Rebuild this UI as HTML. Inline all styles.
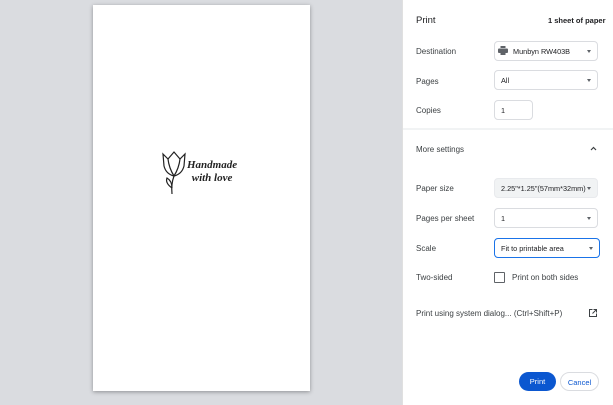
<!DOCTYPE html><html><head><style>
body{margin:0;width:613px;height:405px;overflow:hidden;font-family:"Liberation Sans",sans-serif;position:relative;background:#fff}
.l{position:absolute;left:0;top:0;width:402px;height:405px;background:#dadce0}
.paper{position:absolute;left:93px;top:5px;width:217px;height:386px;background:#fff;box-shadow:0 1px 4px rgba(0,0,0,.35)}
.r{position:absolute;left:402px;top:0;width:211px;height:405px;background:#fff;border-left:1px solid #e0e0e0}
.t{position:absolute;font-size:8px;color:#3c4043;white-space:nowrap}
.sel{position:absolute;left:494px;width:104px;height:20px;border:1px solid #dadce0;border-radius:4px;box-sizing:border-box;font-size:7.3px;color:#202124;padding-left:6px;display:flex;align-items:center}
.sel:after{content:"";position:absolute;right:6px;top:8px;border:2px solid transparent;border-top:3px solid #5f6368}
.btn{position:absolute;top:372px;height:19px;border-radius:10px;font-size:7.5px;text-align:center;line-height:19px;box-sizing:border-box}
</style></head><body>
<div class="l"></div>
<div class="paper">
<svg style="position:absolute;left:66px;top:145px" width="30" height="46" viewBox="0 0 30 46" fill="none" stroke="#222" stroke-width="1.2">
<path d="M4 4 L9 9 L15 2 L21 9 L26 4 L25 16 Q23 24 15 26 Q7 24 5 16 Z"/><path d="M9 9 Q10 18 15 26 M21 9 Q20 18 15 26"/><path d="M15 26 Q12 34 13 44"/><path d="M13 38 Q6 33 8 28 Q13 31 13 38"/></svg>
<div style="position:absolute;left:94px;top:154px;font:italic bold 11px 'Liberation Serif',serif;color:#222;line-height:13px;text-align:center">Handmade<br>with love</div>
</div>
<div class="r"></div>
<div style="position:absolute;left:403px;top:128px;width:210px;height:2px;background:#f1f3f4"></div>
<div class="t" style="left:416px;top:15px;font-size:9.5px;color:#202124">Print</div>
<div class="t" style="left:548px;top:16px;font-weight:bold;font-size:7.5px;color:#202124">1 sheet of paper</div>
<div class="t" style="left:416px;top:47px">Destination</div>
<div class="sel" style="top:41px;padding-left:18px">Munbyn RW403B</div>
<svg style="position:absolute;left:498px;top:46px" width="10" height="9" viewBox="0 0 10 9"><rect x="2.5" y="0" width="5" height="2" fill="#5f6368"/><rect x="0" y="2.5" width="10" height="4.5" rx="1" fill="#5f6368"/><rect x="2.5" y="6" width="5" height="3" fill="#5f6368"/></svg>
<div class="t" style="left:416px;top:77px">Pages</div>
<div class="sel" style="top:70px">All</div>
<div class="t" style="left:416px;top:106px">Copies</div>
<div class="sel nc" style="top:100px;width:39px">1</div>
<style>.nc:after{display:none}</style>
<div class="t" style="left:416px;top:145px">More settings</div>
<svg style="position:absolute;left:590px;top:146px" width="7" height="5"><path d="M1 4 L3.5 1.5 L6 4" stroke="#3c4043" stroke-width="1.2" fill="none"/></svg>
<div class="t" style="left:416px;top:184px">Paper size</div>
<div class="sel" style="top:178px;background:#f1f3f4;border-color:#e8eaed">2.25"*1.25"(57mm*32mm)</div>
<div class="t" style="left:416px;top:214px">Pages per sheet</div>
<div class="sel" style="top:208px">1</div>
<div class="t" style="left:416px;top:244px">Scale</div>
<div class="sel" style="top:238px;border:1.5px solid #1a73e8;width:106px">Fit to printable area</div>
<div class="t" style="left:416px;top:273px">Two-sided</div>
<div style="position:absolute;left:494px;top:272px;width:9px;height:9px;border:1.3px solid #5f6368;border-radius:1px"></div>
<div class="t" style="left:512px;top:273px">Print on both sides</div>
<div class="t" style="left:416px;top:309px">Print using system dialog... (Ctrl+Shift+P)</div>
<svg style="position:absolute;left:589px;top:309px" width="8" height="8" viewBox="0 0 8 8" fill="none" stroke="#3c4043" stroke-width="1"><path d="M3.5 .5 H.5 V7.5 H7.5 V4.5 M4.5 .5 H7.5 V3.5 M7.5 .5 L3.5 4.5"/></svg>
<div class="btn" style="left:519px;width:37px;background:#0b57d0;color:#fff">Print</div>
<div class="btn" style="left:560px;width:39px;border:1px solid #dadce0;color:#0b57d0">Cancel</div>
</body></html>
